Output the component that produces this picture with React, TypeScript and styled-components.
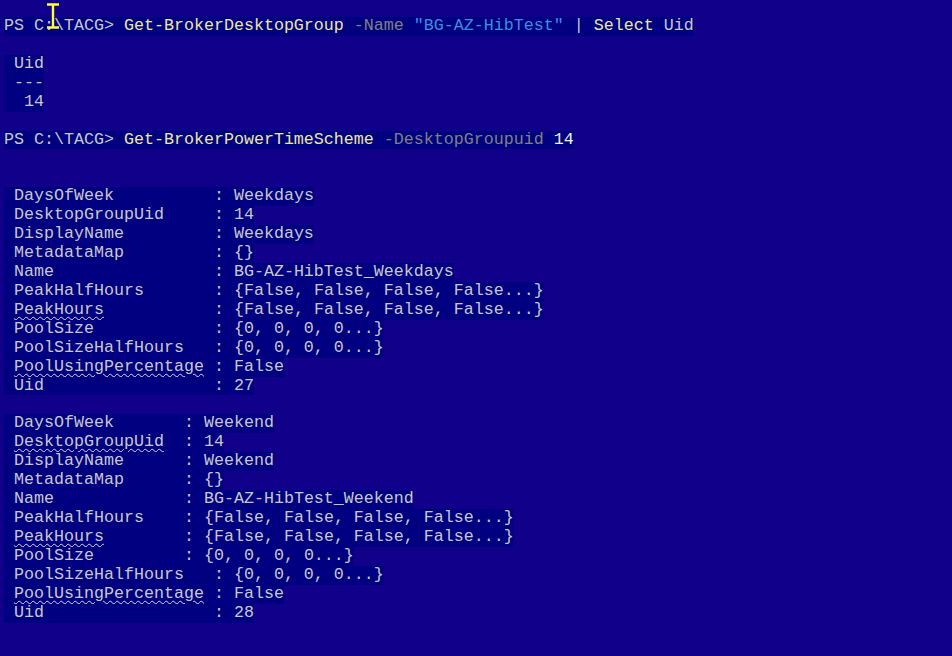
import React from "react";
import styled, { createGlobalStyle } from "styled-components";

const Global = createGlobalStyle`
  html, body { margin: 0; padding: 0; background: #11008a; }
  body { width: 952px; height: 656px; overflow: hidden; }
`;

const Console = styled.div`
  position: relative;
  box-sizing: border-box;
  width: 952px;
  height: 656px;
  padding: 17px 0 0 4px;
  background: #11008a;
  font-family: "Liberation Mono", "Courier New", monospace;
  font-size: 16.66px;
  line-height: 18.93px;
  color: #c8c8cc;
`;

const Line = styled.div`
  height: 18.93px;
  white-space: pre;
`;

const Mark = styled.span`
  display: inline-block;
  height: 18.93px;
  vertical-align: top;
  background: #000080;
`;

type Kind = "text" | "cmd" | "param" | "str" | "num";

const colors: Record<Kind, string> = {
  text: "#c8c8cc",
  cmd: "#ede6a2",
  param: "#808080",
  str: "#3f8de0",
  num: "#f2f2f2",
};

const Tok = styled.span<{ $kind: Kind }>`
  color: ${(p) => colors[p.$kind]};
`;

const Squiggle = styled.span`
  text-decoration: underline wavy #d8d8e0;
  text-decoration-thickness: 1px;
  text-underline-offset: 2px;
`;

const Cursor = styled.svg`
  position: absolute;
  left: 46px;
  top: 2px;
`;

type Row = { key: string; sep: string; value: string; wavy?: boolean };

const block1: Row[] = [
  { key: "DaysOfWeek", sep: "          : ", value: "Weekdays" },
  { key: "DesktopGroupUid", sep: "     : ", value: "14" },
  { key: "DisplayName", sep: "         : ", value: "Weekdays" },
  { key: "MetadataMap", sep: "         : ", value: "{}" },
  { key: "Name", sep: "                : ", value: "BG-AZ-HibTest_Weekdays" },
  { key: "PeakHalfHours", sep: "       : ", value: "{False, False, False, False...}" },
  { key: "PeakHours", sep: "           : ", value: "{False, False, False, False...}", wavy: true },
  { key: "PoolSize", sep: "            : ", value: "{0, 0, 0, 0...}" },
  { key: "PoolSizeHalfHours", sep: "   : ", value: "{0, 0, 0, 0...}" },
  { key: "PoolUsingPercentage", sep: " : ", value: "False", wavy: true },
  { key: "Uid", sep: "                 : ", value: "27" },
];

const block2: Row[] = [
  { key: "DaysOfWeek", sep: "       : ", value: "Weekend" },
  { key: "DesktopGroupUid", sep: "  : ", value: "14", wavy: true },
  { key: "DisplayName", sep: "      : ", value: "Weekend" },
  { key: "MetadataMap", sep: "      : ", value: "{}" },
  { key: "Name", sep: "             : ", value: "BG-AZ-HibTest_Weekend" },
  { key: "PeakHalfHours", sep: "    : ", value: "{False, False, False, False...}" },
  { key: "PeakHours", sep: "        : ", value: "{False, False, False, False...}", wavy: true },
  { key: "PoolSize", sep: "         : ", value: "{0, 0, 0, 0...}" },
  { key: "PoolSizeHalfHours", sep: "   : ", value: "{0, 0, 0, 0...}" },
  { key: "PoolUsingPercentage", sep: " : ", value: "False", wavy: true },
  { key: "Uid", sep: "                 : ", value: "28" },
];

const Blank = () => <Line />;

const PropBlock = ({ rows }: { rows: Row[] }) => (
  <>
    {rows.map((r) => (
      <Line key={r.key}>
        <Mark>
          {" "}
          {r.wavy ? <Squiggle>{r.key}</Squiggle> : r.key}
          {r.sep}
          {r.value}
        </Mark>
      </Line>
    ))}
  </>
);

export default function App() {
  return (
    <>
      <Global />
      <Console>
        <Line>
          <Mark>
            <Tok $kind="text">PS C:\TACG&gt; </Tok>
            <Tok $kind="cmd">Get-BrokerDesktopGroup</Tok>
            <Tok $kind="text"> </Tok>
            <Tok $kind="param">-Name</Tok>
            <Tok $kind="text"> </Tok>
            <Tok $kind="str">"BG-AZ-HibTest"</Tok>
            <Tok $kind="text"> | </Tok>
            <Tok $kind="cmd">Select</Tok>
            <Tok $kind="text"> Uid</Tok>
          </Mark>
        </Line>
        <Blank />
        <Line>
          <Mark> Uid</Mark>
        </Line>
        <Line>
          <Mark> ---</Mark>
        </Line>
        <Line>
          <Mark>  14</Mark>
        </Line>
        <Blank />
        <Line>
          <Mark>
            <Tok $kind="text">PS C:\TACG&gt; </Tok>
            <Tok $kind="cmd">Get-BrokerPowerTimeScheme</Tok>
            <Tok $kind="text"> </Tok>
            <Tok $kind="param">-DesktopGroupuid</Tok>
            <Tok $kind="text"> </Tok>
            <Tok $kind="num">14</Tok>
          </Mark>
        </Line>
        <Blank />
        <Blank />
        <PropBlock rows={block1} />
        <Blank />
        <PropBlock rows={block2} />
        <Cursor width="16" height="28" viewBox="0 0 16 28">
          <path d="M1 2.5 H13 M7 2.5 V25.5 M1 25.5 H13" stroke="#ffff33" strokeWidth="2.4" fill="none" />
        </Cursor>
      </Console>
    </>
  );
}
